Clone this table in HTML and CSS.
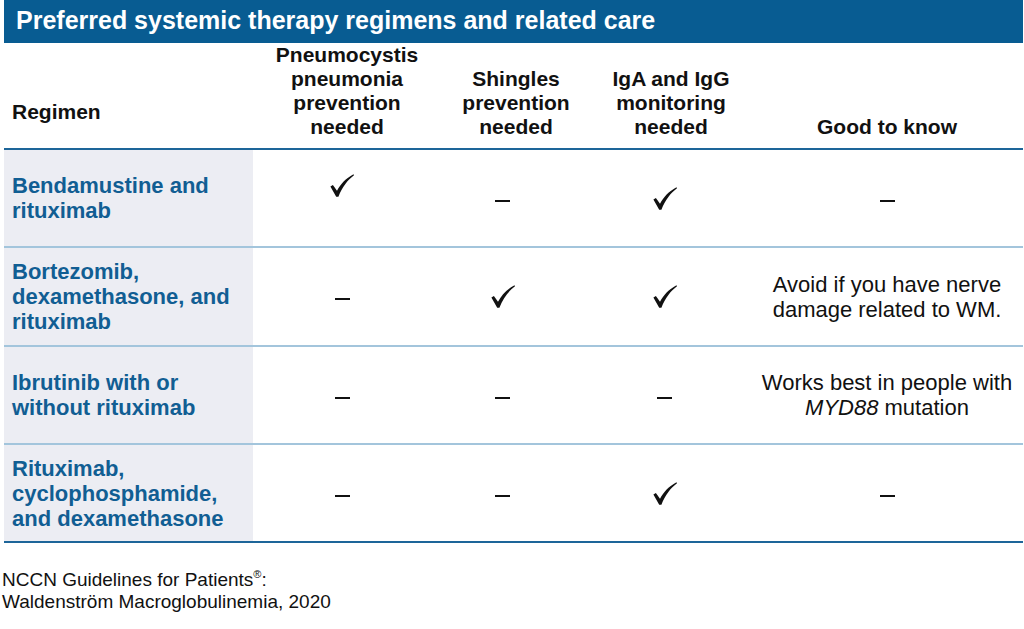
FILE: index.html
```html
<!DOCTYPE html>
<html lang="en">
<head>
<meta charset="utf-8">
<title>Preferred systemic therapy regimens and related care</title>
<link rel="stylesheet" href="styles.css">
</head>
<body>
<div class="sheet">
  <div class="titlebar">Preferred systemic therapy regimens and related care</div>
  <div class="table">
    <div class="row head">
      <div class="cell c1">Regimen</div>
      <div class="cell c2">Pneumocystis<br>pneumonia<br>prevention<br>needed</div>
      <div class="cell c3">Shingles<br>prevention<br>needed</div>
      <div class="cell c4">IgA and IgG<br>monitoring<br>needed</div>
      <div class="cell c5">Good to know</div>
    </div>

    <div class="row data r1">
      <div class="cell c1">Bendamustine and<br>rituximab</div>
      <div class="cell c2 raised"><svg class="check" viewBox="0 0 24 23"><path d="M0.4 12.6 L2.9 10.9 L7 16.8 C10.6 9.8 15.6 4.4 23.5 0.2 L24 1.2 C17.6 6 12.2 13 8.4 22.8 L6.2 22.8 Z"/></svg></div>
      <div class="cell c3"><span class="dash"></span></div>
      <div class="cell c4"><svg class="check" viewBox="0 0 24 23"><path d="M0.4 12.6 L2.9 10.9 L7 16.8 C10.6 9.8 15.6 4.4 23.5 0.2 L24 1.2 C17.6 6 12.2 13 8.4 22.8 L6.2 22.8 Z"/></svg></div>
      <div class="cell c5"><span class="dash"></span></div>
    </div>

    <div class="row data r2">
      <div class="cell c1">Bortezomib,<br>dexamethasone, and<br>rituximab</div>
      <div class="cell c2"><span class="dash"></span></div>
      <div class="cell c3"><svg class="check" viewBox="0 0 24 23"><path d="M0.4 12.6 L2.9 10.9 L7 16.8 C10.6 9.8 15.6 4.4 23.5 0.2 L24 1.2 C17.6 6 12.2 13 8.4 22.8 L6.2 22.8 Z"/></svg></div>
      <div class="cell c4"><svg class="check" viewBox="0 0 24 23"><path d="M0.4 12.6 L2.9 10.9 L7 16.8 C10.6 9.8 15.6 4.4 23.5 0.2 L24 1.2 C17.6 6 12.2 13 8.4 22.8 L6.2 22.8 Z"/></svg></div>
      <div class="cell c5"><p class="note">Avoid if you have nerve<br>damage related to WM.</p></div>
    </div>

    <div class="row data r3">
      <div class="cell c1">Ibrutinib with or<br>without rituximab</div>
      <div class="cell c2"><span class="dash"></span></div>
      <div class="cell c3"><span class="dash"></span></div>
      <div class="cell c4"><span class="dash"></span></div>
      <div class="cell c5"><p class="note">Works best in people with<br><i>MYD88</i> mutation</p></div>
    </div>

    <div class="row data r4">
      <div class="cell c1">Rituximab,<br>cyclophosphamide,<br>and dexamethasone</div>
      <div class="cell c2"><span class="dash"></span></div>
      <div class="cell c3"><span class="dash"></span></div>
      <div class="cell c4"><svg class="check" viewBox="0 0 24 23"><path d="M0.4 12.6 L2.9 10.9 L7 16.8 C10.6 9.8 15.6 4.4 23.5 0.2 L24 1.2 C17.6 6 12.2 13 8.4 22.8 L6.2 22.8 Z"/></svg></div>
      <div class="cell c5"><span class="dash"></span></div>
    </div>
  </div>
  <p class="source">NCCN Guidelines for Patients<span class="reg">®</span>:<br>Waldenström Macroglobulinemia, 2020</p>
</div>
</body>
</html>
```

FILE: styles.css
```css
html, body {
  margin: 0;
  padding: 0;
  background: #ffffff;
}

body {
  font-family: "Liberation Sans", Arial, Helvetica, sans-serif;
  color: #111111;
}

.sheet {
  width: 1019px;
  padding-left: 4px;
}

.titlebar {
  height: 43px;
  box-sizing: border-box;
  background: #085c92;
  color: #ffffff;
  font-weight: 700;
  font-size: 25px;
  line-height: 40px;
  padding-left: 12px;
  white-space: nowrap;
}

.row {
  display: grid;
  grid-template-columns: 249px 188px 150px 160px 272px;
}

/* header row */
.head {
  height: 105px;
  border-bottom: 2px solid #1d6599;
}

.head .cell {
  display: flex;
  flex-direction: column;
  justify-content: flex-end;
  align-items: center;
  text-align: center;
  font-weight: 700;
  font-size: 21px;
  line-height: 24px;
  padding-bottom: 9px;
  color: #111111;
}

.head .c1 {
  align-items: flex-start;
  text-align: left;
  padding-left: 8px;
  padding-bottom: 24px;
}

/* data rows */
.data {
  border-bottom: 2px solid #a3c5dc;
}

.r1 { height: 96px; }
.r2 { height: 97px; }
.r3 { height: 96px; }
.r4 {
  height: 96px;
  border-bottom-color: #1d6599;
}

.data .cell {
  display: flex;
  align-items: center;
  justify-content: center;
}

.data .c1 {
  justify-content: flex-start;
  background: #ecedf3;
  padding-left: 8px;
  color: #115e93;
  font-weight: 700;
  font-size: 22px;
  line-height: 25px;
}

.data .c2 { padding-right: 10px; }
.data .c3 { padding-right: 27px; }
.data .c4 { padding-right: 13px; }
.data .c5 { padding-right: 0; }

.data .raised {
  padding-bottom: 26px;
}

.note {
  margin: 0;
  text-align: center;
  font-size: 22px;
  line-height: 25px;
  color: #111111;
}

.check {
  width: 24px;
  height: 23px;
  fill: #111111;
}

.dash {
  display: block;
  width: 15px;
  height: 2px;
  background: #111111;
  margin-top: 5px;
}

.source {
  margin: 26px 0 0 -2px;
  font-size: 19px;
  line-height: 21.5px;
  color: #111111;
}

.reg {
  font-size: 11px;
  vertical-align: 8px;
  line-height: 0;
}
```
